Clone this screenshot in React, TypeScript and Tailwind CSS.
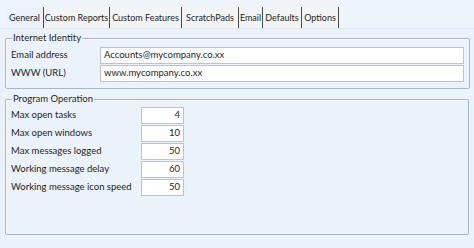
const tabs = [
  { label: "General", w: "w-[38px]" },
  { label: "Custom Reports", w: "w-[66px]" },
  { label: "Custom Features", w: "w-[72px]" },
  { label: "ScratchPads", w: "w-[57px]" },
  { label: "Email", w: "w-[24px]" },
  { label: "Defaults", w: "w-[39px]" },
  { label: "Options", w: "w-[37px]" },
];

const numbers = [
  { label: "Max open tasks", value: "4" },
  { label: "Max open windows", value: "10" },
  { label: "Max messages logged", value: "50" },
  { label: "Working message delay", value: "60" },
  { label: "Working message icon speed", value: "50" },
];

export default function App() {
  return (
    <div className="h-[248px] w-[474px] overflow-hidden bg-[#eaf2fb] font-['Lato',sans-serif] text-[9.5px] text-[#1e1e1e]">
      <div className="flex h-[28px] items-end bg-[#eef4fb] pl-[6px] text-[9px]">
        {tabs.map((t, i) => (
          <div
            key={t.label}
            className={`flex h-[21px] items-center justify-center whitespace-nowrap border-r border-[#4a4a4a] ${t.w} ${
              i === 0 ? "bg-[#eaf2fb]" : "bg-[#f3f4f6]"
            }`}
          >
            {t.label}
          </div>
        ))}
      </div>
      <div className="border-t border-[#dfe6ef] px-[5px] pt-[2px]">
        <fieldset className="rounded-[2px] border border-[#a9b5c4] px-[5px] pb-[6px] shadow-[inset_1px_1px_0_#ffffff]">
          <legend className="ml-[1px] px-[1px] leading-[14px]">Internet Identity</legend>
          <div className="flex flex-col gap-[1px] pt-[2px]">
            <div className="flex items-center">
              <span className="w-[89px] whitespace-nowrap">Email address</span>
              <div className="flex h-[17px] w-[364px] items-center border border-[#bcc3cc] bg-white px-[3px]">
                Accounts@mycompany.co.xx
              </div>
            </div>
            <div className="flex items-center">
              <span className="w-[89px] whitespace-nowrap">WWW (URL)</span>
              <div className="flex h-[17px] w-[364px] items-center border border-[#bcc3cc] bg-white px-[3px]">
                www.mycompany.co.xx
              </div>
            </div>
          </div>
        </fieldset>
        <fieldset className="mt-[3px] h-[143px] rounded-[2px] border border-[#a9b5c4] px-[5px] shadow-[inset_1px_1px_0_#ffffff]">
          <legend className="ml-[1px] px-[1px] leading-[14px]">Program Operation</legend>
          <div className="flex flex-col gap-[1px] pt-[1px]">
            {numbers.map((n) => (
              <div key={n.label} className="flex items-center">
                <span className="w-[130px] whitespace-nowrap">{n.label}</span>
                <div className="flex h-[17px] w-[43px] items-center justify-end border border-[#bcc3cc] bg-white px-[3px]">
                  {n.value}
                </div>
              </div>
            ))}
          </div>
        </fieldset>
      </div>
    </div>
  );
}
